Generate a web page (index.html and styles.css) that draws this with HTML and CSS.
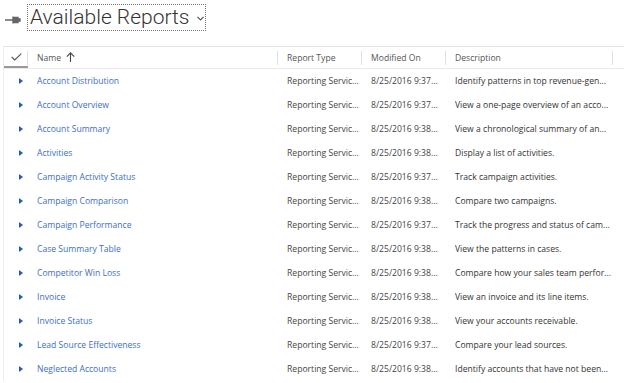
FILE: index.html
```html
<!DOCTYPE html>
<html lang="en">
<head>
    <meta charset="UTF-8">
    <title>Available Reports</title>
    <link rel="stylesheet" href="styles.css">
</head>
<body>

    <!-- Title bar -->
    <div class="title-bar">
        <svg class="pin" width="16" height="10" viewBox="0 0 16 10">
            <path d="M0 5h8M8 1.5v7M8 2.5h5v5H8M13 4h2v2h-2" stroke="#666" stroke-width="1.4" fill="#666"/>
        </svg>
        <div class="view-picker">
            <span class="view-name">Available Reports</span>
            <svg class="chevron" width="7" height="5" viewBox="0 0 7 5">
                <path d="M0.5 0.8L3.5 3.8L6.5 0.8" stroke="#555" stroke-width="1.2" fill="none"/>
            </svg>
        </div>
    </div>

    <!-- Report grid -->
    <div class="grid">
        <div class="grid-header">
            <div class="col col-check">
                <svg width="11" height="8" viewBox="0 0 11 8">
                    <path d="M0.7 4L3.8 7L10.3 0.7" stroke="#555" stroke-width="1.1" fill="none"/>
                </svg>
            </div>
            <div class="col col-name">Name
                <svg class="sort" width="9" height="10" viewBox="0 0 9 10">
                    <path d="M4.5 10V1M0.8 4.6L4.5 0.9L8.2 4.6" stroke="#444" stroke-width="1.1" fill="none"/>
                </svg>
            </div>
            <div class="col col-type">Report Type</div>
            <div class="col col-date">Modified On</div>
            <div class="col col-desc">Description</div>
            <div class="col col-rest"></div>
        </div>

        <div id="rows"></div>
    </div>

    <script>
        const reports = [
            ['Account Distribution', '8/25/2016 9:37...', 'Identify patterns in top revenue-gen...'],
            ['Account Overview', '8/25/2016 9:37...', 'View a one-page overview of an acco...'],
            ['Account Summary', '8/25/2016 9:38...', 'View a chronological summary of an...'],
            ['Activities', '8/25/2016 9:38...', 'Display a list of activities.'],
            ['Campaign Activity Status', '8/25/2016 9:37...', 'Track campaign activities.'],
            ['Campaign Comparison', '8/25/2016 9:38...', 'Compare two campaigns.'],
            ['Campaign Performance', '8/25/2016 9:37...', 'Track the progress and status of cam...'],
            ['Case Summary Table', '8/25/2016 9:38...', 'View the patterns in cases.'],
            ['Competitor Win Loss', '8/25/2016 9:38...', 'Compare how your sales team perfor...'],
            ['Invoice', '8/25/2016 9:38...', 'View an invoice and its line items.'],
            ['Invoice Status', '8/25/2016 9:38...', 'View your accounts receivable.'],
            ['Lead Source Effectiveness', '8/25/2016 9:37...', 'Compare your lead sources.'],
            ['Neglected Accounts', '8/25/2016 9:38...', 'Identify accounts that have not been...']
        ];

        const rows = document.getElementById('rows');

        reports.forEach(([name, date, desc]) => {
            const row = document.createElement('div');
            row.className = 'grid-row';
            row.innerHTML =
                '<div class="col col-check"><span class="expand"></span></div>' +
                '<div class="col col-name"><a href="#">' + name + '</a></div>' +
                '<div class="col col-type">Reporting Servic...</div>' +
                '<div class="col col-date">' + date + '</div>' +
                '<div class="col col-desc">' + desc + '</div>' +
                '<div class="col col-rest"></div>';
            rows.appendChild(row);
        });
    </script>

</body>
</html>
```

FILE: styles.css
```css
* {
    margin: 0;
    padding: 0;
    box-sizing: border-box;
}

body, html {
    height: 100%;
    font-family: 'Open Sans', sans-serif;
    background: #fff;
    color: #444;
    overflow: hidden;
}

/* Title */
.title-bar {
    height: 46px;
    display: flex;
    align-items: flex-start;
    padding-top: 4px;
}

.pin {
    margin: 11px 0 0 5px;
}

.view-picker {
    margin-left: 6px;
    height: 27px;
    width: 179px;
    border: 1px dotted #777;
    display: flex;
    align-items: center;
    padding-left: 2px;
}

.view-name {
    font-family: Roboto, 'Open Sans', sans-serif;
    font-size: 21px;
    font-weight: 300;
    color: #333;
    line-height: 25px;
    white-space: nowrap;
}

.chevron {
    margin-left: 8px;
    margin-top: 2px;
}

/* Grid */
.grid {
    margin-left: 3px;
    border-left: 1px solid #eee;
    border-top: 1px solid #e4e4e4;
    font-size: 8.6px;
}

.grid-header,
.grid-row {
    display: flex;
    align-items: center;
}

.grid-header {
    height: 22px;
    border-bottom: 1px solid #eaeaea;
    color: #555;
}

.grid-header .col {
    border-right: 1px solid #e0e0e0;
    height: 14px;
    line-height: 14px;
}

.grid-header .col-check {
    height: 21px;
    display: flex;
    align-items: center;
    justify-content: center;
    border-bottom: 2px solid #999;
    border-right: none;
    position: relative;
}

.grid-header .col-check::after {
    content: '';
    position: absolute;
    right: 0;
    top: 4px;
    height: 14px;
    border-right: 1px solid #e0e0e0;
}

.grid-header .col-rest {
    border-right: none;
}

.grid-row {
    height: 24px;
}

.col {
    white-space: nowrap;
    overflow: hidden;
    padding-left: 9px;
}

.col-check {
    width: 24px;
    padding-left: 0;
    flex-shrink: 0;
}

.col-name {
    width: 250px;
}

.col-type,
.col-date {
    width: 84px;
}

.col-desc {
    width: 167px;
}

.grid-row .col-desc {
    overflow: visible;
    color: #333;
}

.col-rest {
    flex: 1;
}

.sort {
    margin-left: 3px;
    vertical-align: -1px;
}

.grid-row .col-check {
    display: flex;
    justify-content: flex-end;
    padding-right: 5px;
}

.expand {
    width: 0;
    height: 0;
    border-top: 3.5px solid transparent;
    border-bottom: 3.5px solid transparent;
    border-left: 4px solid #1c5fb8;
}

.grid-row a {
    color: #3d6fc4;
    text-decoration: none;
}
```
